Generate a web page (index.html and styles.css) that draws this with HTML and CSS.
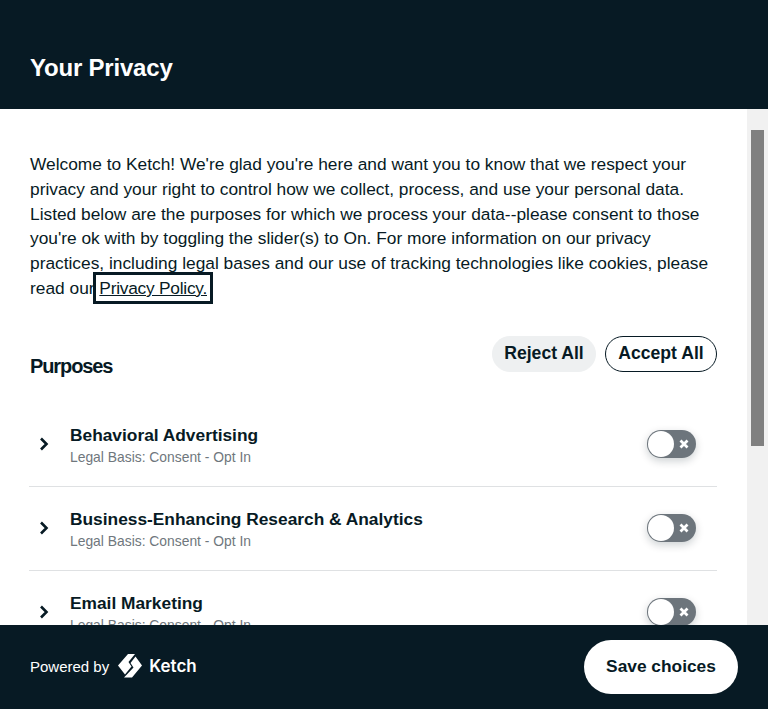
FILE: index.html
```html
<!DOCTYPE html>
<html lang="en">

<head>
    <meta charset="UTF-8">
    <meta name="viewport" content="width=device-width, initial-scale=1.0">
    <title>Your Privacy</title>
    <link rel="stylesheet" href="styles.css">
</head>

<body>
    <div class="header">Your Privacy</div>
    <div class="main">
        <div class="content">
            <p class="intro">Welcome to Ketch! We're glad you're here and want you to know that we respect your privacy and your right to control how we collect, process, and use your personal data. Listed below are the purposes for which we process your data--please consent to those you're ok with by toggling the slider(s) to On. For more information on our privacy practices, including legal bases and our use of tracking technologies like cookies, please read our <a class="policy" href="#">Privacy Policy.</a></p>
            <div class="purposes-head">
                <h2 class="purposes-title">Purposes</h2>
                <div class="actions">
                    <button class="btn btn-reject">Reject All</button>
                    <button class="btn btn-accept">Accept All</button>
                </div>
            </div>
            <div class="row">
                <svg class="chevron" viewBox="0 0 10 14"><path d="M2 1.5 7.5 7 2 12.5" /></svg>
                <div class="row-text">
                    <div class="row-title">Behavioral Advertising</div>
                    <div class="row-sub">Legal Basis: Consent - Opt In</div>
                </div>
                <div class="toggle"><span class="knob"></span><svg class="cross" viewBox="0 0 10 10"><path d="M1.5 1.5 8.5 8.5M8.5 1.5 1.5 8.5" /></svg></div>
            </div>
            <div class="row">
                <svg class="chevron" viewBox="0 0 10 14"><path d="M2 1.5 7.5 7 2 12.5" /></svg>
                <div class="row-text">
                    <div class="row-title">Business-Enhancing Research &amp; Analytics</div>
                    <div class="row-sub">Legal Basis: Consent - Opt In</div>
                </div>
                <div class="toggle"><span class="knob"></span><svg class="cross" viewBox="0 0 10 10"><path d="M1.5 1.5 8.5 8.5M8.5 1.5 1.5 8.5" /></svg></div>
            </div>
            <div class="row">
                <svg class="chevron" viewBox="0 0 10 14"><path d="M2 1.5 7.5 7 2 12.5" /></svg>
                <div class="row-text">
                    <div class="row-title">Email Marketing</div>
                    <div class="row-sub">Legal Basis: Consent - Opt In</div>
                </div>
                <div class="toggle"><span class="knob"></span><svg class="cross" viewBox="0 0 10 10"><path d="M1.5 1.5 8.5 8.5M8.5 1.5 1.5 8.5" /></svg></div>
            </div>
        </div>
        <div class="scrollbar"><div class="thumb"></div></div>
    </div>
    <div class="footer">
        <div class="powered">
            <span>Powered by</span>
            <svg class="logo" viewBox="0 0 24 24">
                <path d="M10 0H17L10.5 8 13.5 12.5 7 20.5 0 11.5Z" />
                <path d="M17.5 2.5 24 11.5 14 23.5H6L15.5 13.5 12.5 9Z" />
            </svg>
            <span class="brand">Ketch</span>
        </div>
        <button class="save">Save choices</button>
    </div>
</body>
</html>
```

FILE: styles.css
```css
* {
    margin: 0;
    padding: 0;
    box-sizing: border-box;
}
html, body {
    height: 100%;
}
body {
    display: flex;
    flex-direction: column;
    overflow: hidden;
    font-family: "Liberation Sans", Arial, sans-serif;
    color: #071a24;
    background-color: white;
}
.header {
    height: 109px;
    flex-shrink: 0;
    display: flex;
    align-items: center;
    padding-left: 30px;
    padding-top: 26px;
    background-color: #071a24;
    color: white;
    font-size: 24px;
    font-weight: bold;
    letter-spacing: -0.2px;
}
.main {
    flex: 1;
    min-height: 0;
    display: flex;
}
.content {
    flex: 1;
    min-width: 0;
    overflow: hidden;
    padding: 43px 30px 0 29px;
}
.scrollbar {
    width: 21px;
    flex-shrink: 0;
    padding: 21px 4px;
    background-color: #f1f1f1;
}
.thumb {
    height: 316px;
    background-color: #808080;
}
.intro {
    padding-left: 1px;
    font-size: 17.33px;
    line-height: 24.8px;
}
.policy {
    color: #071a24;
    letter-spacing: -0.25px;
    outline: 3px solid #071a24;
    outline-offset: 3px;
}
.purposes-head {
    display: flex;
    justify-content: space-between;
    align-items: flex-start;
    margin-top: 35px;
    padding-left: 1px;
}
.purposes-title {
    margin-top: 19px;
    font-size: 20px;
    letter-spacing: -1.1px;
}
.actions {
    display: flex;
    gap: 9px;
}
.btn {
    height: 36px;
    border-radius: 18px;
    font-family: inherit;
    font-size: 17.6px;
    font-weight: bold;
    color: #071a24;
    border: 1px solid #071a24;
    background-color: white;
}
.btn-reject {
    width: 104px;
    border-color: #eef0f1;
    background-color: #eef0f1;
}
.btn-accept {
    width: 112px;
}
.row {
    height: 84px;
    display: flex;
    align-items: center;
    border-bottom: 1px solid #dfe1e3;
}
.purposes-head + .row {
    margin-top: 25px;
}
.chevron {
    width: 10px;
    height: 14px;
    margin-left: 10px;
    fill: none;
    stroke: #071a24;
    stroke-width: 2.6;
}
.row-text {
    flex: 1;
    margin-left: 21px;
    margin-top: 2px;
}
.row-title {
    font-size: 17.33px;
    font-weight: bold;
    line-height: 22px;
}
.row-sub {
    margin-top: 2px;
    font-size: 13.86px;
    line-height: 18px;
    color: #6f777d;
}
.toggle {
    position: relative;
    width: 49px;
    height: 28px;
    margin-right: 21px;
    border-radius: 14px;
    background-color: #6d757c;
    box-shadow: 0 3px 8px rgba(7, 26, 36, 0.2);
}
.knob {
    position: absolute;
    top: 1px;
    left: 1px;
    width: 26px;
    height: 26px;
    border-radius: 50%;
    background-color: white;
}
.cross {
    position: absolute;
    top: 9px;
    right: 7px;
    width: 10px;
    height: 10px;
    fill: none;
    stroke: white;
    stroke-width: 2.8;
}
.footer {
    height: 84px;
    flex-shrink: 0;
    display: flex;
    align-items: center;
    justify-content: space-between;
    padding: 0 30px;
    background-color: #071a24;
    color: white;
}
.powered {
    display: flex;
    align-items: center;
    margin-bottom: 2px;
    font-size: 15px;
}
.logo {
    width: 24px;
    height: 24px;
    margin-left: 9px;
    fill: white;
}
.brand {
    margin-left: 7px;
    font-family: Inter, sans-serif;
    font-size: 17px;
    font-weight: 600;
}
.save {
    width: 154px;
    height: 54px;
    padding-bottom: 2px;
    border: none;
    border-radius: 27px;
    background-color: white;
    color: #071a24;
    font-family: inherit;
    font-size: 17.33px;
    font-weight: bold;
}
```
